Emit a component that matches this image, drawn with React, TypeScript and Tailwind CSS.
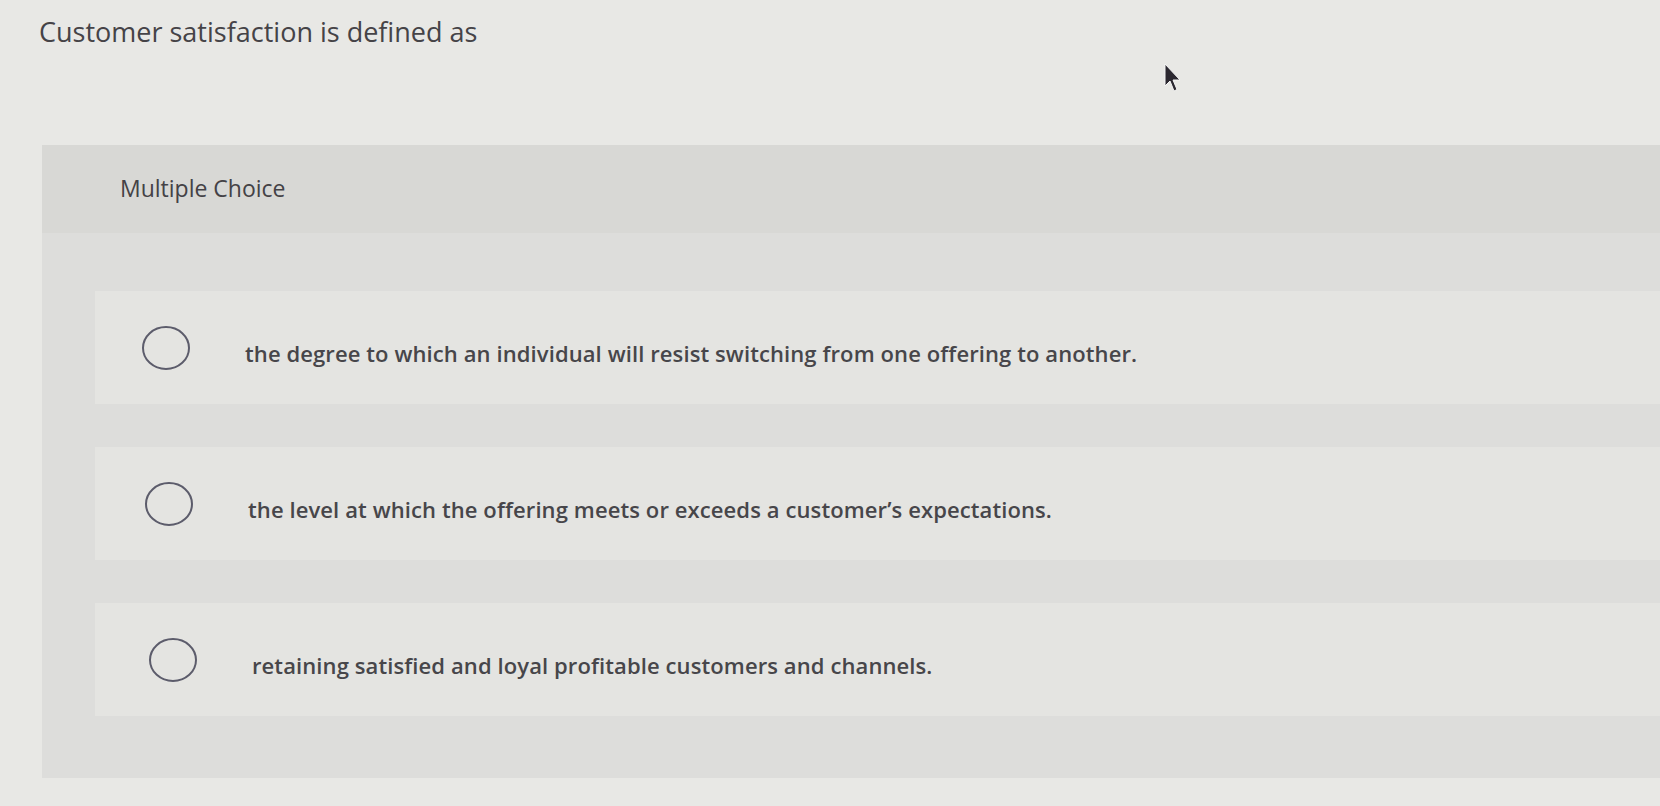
import React from "react";

const options = [
  { text: "the degree to which an individual will resist switching from one offering to another.", shift: "pl-[46px]" },
  { text: "the level at which the offering meets or exceeds a customer\u2019s expectations.", shift: "pl-[49px]" },
  { text: "retaining satisfied and loyal profitable customers and channels.", shift: "pl-[53px]" },
];

function Radio() {
  return (
    <svg width="50" height="46" viewBox="0 0 50 46" className="shrink-0">
      <ellipse cx="25" cy="23" rx="23" ry="21" fill="none" stroke="#5c5c6b" strokeWidth="2" />
    </svg>
  );
}

export default function App() {
  return (
    <div
      className="relative w-[1660px] h-[806px] overflow-hidden bg-[#e8e8e5] text-[#3d3d3f]"
      style={{ fontFamily: "'Open Sans', Lato, sans-serif" }}
    >
      <h1 className="pl-[39px] pt-[15px] text-[27px] leading-[34px] font-normal text-[#454347]">
        Customer satisfaction is defined as
      </h1>

      {/* mouse pointer */}
      <svg
        className="absolute left-[1163px] top-[62px]"
        width="20"
        height="32"
        viewBox="0 0 20 32"
      >
        <path d="M2 2 L2 24 L7 19 L11 29 L14 27.5 L10 18 L17 18 Z" fill="#2b2830" stroke="#f4f4f4" strokeWidth="1" />
      </svg>

      <div className="ml-[42px] mt-[96px] h-[633px] bg-[#dddddb]">
        <div className="h-[88px] pl-[78px] pt-[26px] bg-[#d8d8d5] text-[23px] font-medium text-[#444246]">
          Multiple Choice
        </div>

        <div className="pl-[53px] pt-[58px] flex flex-col gap-[43px]">
          {options.map((o, i) => (
            <div
              key={i}
              className={`h-[113px] bg-[#e4e4e1] flex items-center gap-[54px] ${o.shift}`}
            >
              <Radio />
              <span className="pt-[11px] text-[22px] font-semibold tracking-[0.1px] text-[#47464a]">
                {o.text}
              </span>
            </div>
          ))}
        </div>
      </div>
    </div>
  );
}
